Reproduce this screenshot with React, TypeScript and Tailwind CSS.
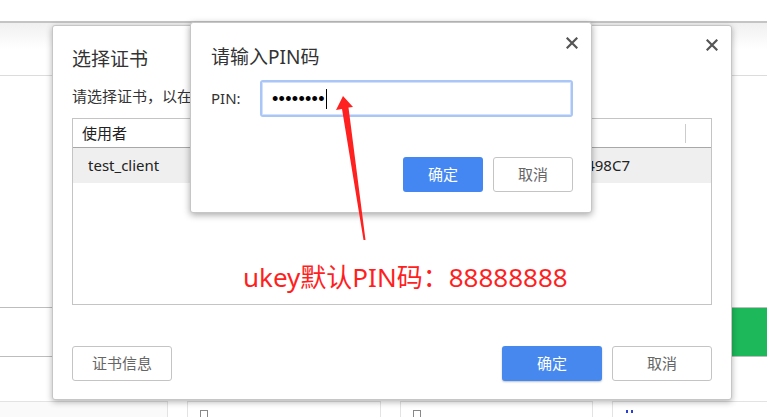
import React from "react";

function XIcon({ className }: { className?: string }) {
  return (
    <svg viewBox="0 0 12 12" className={className} fill="none">
      <path d="M1.5 1.5 L10.5 10.5 M10.5 1.5 L1.5 10.5" stroke="#555555" strokeWidth="2.2" strokeLinecap="square" />
    </svg>
  );
}

export default function App() {
  return (
    <div className="relative w-[767px] h-[417px] overflow-hidden bg-white font-['Noto_Sans','Noto_Sans_CJK_SC',sans-serif] text-[#333]">
      {/* background page */}
      <div className="flex flex-col h-full">
        <div className="h-[21px] shrink-0 bg-white" />
        <div className="h-[2px] shrink-0 bg-[#c4c4c4]" />
        <div className="h-[53px] shrink-0 border-b border-[#dcdcdc] bg-gradient-to-b from-[#f0f0f0] via-white to-white" />
        <div className="h-[231px] shrink-0" />
        <div className="h-[50px] shrink-0 border-y border-[#bdbdbd] flex justify-end">
          <div className="w-[35px] bg-[#1db85a]" />
        </div>
        <div className="h-[44px] shrink-0" />
        <div className="flex-1 flex gap-[19px] bg-white">
          <div className="w-[168px] border-t border-r border-[#e3e3e3] bg-[#fafafa]" />
          <div className="w-[194px] border-t border-x border-[#e3e3e3] pl-[12px] pt-[8px]">
            <div className="w-[8px] h-[8px] border border-[#888] border-b-0" />
          </div>
          <div className="w-[193px] border-t border-x border-[#e3e3e3] pl-[12px] pt-[8px]">
            <div className="w-[8px] h-[8px] border border-[#888] border-b-0" />
          </div>
          <div className="flex-1 border-t border-l border-[#e3e3e3] pl-[13px] pt-[8px] flex gap-[3px]">
            <div className="w-[2px] h-[3px] bg-[#2a3fd6]" />
            <div className="w-[2px] h-[3px] bg-[#2a3fd6]" />
          </div>
        </div>
      </div>

      {/* certificate dialog */}
      <div className="absolute left-[52px] top-[25px] w-[680px] h-[375px] bg-white border border-[#c6c6c6] rounded-[3px] shadow-[0_2px_6px_rgba(0,0,0,0.3)] flex flex-col px-[19px] pt-[20px] pb-[18px]">
        <div className="absolute left-[653px] top-[13px] w-[12px] h-[12px]">
          <XIcon className="w-[12px] h-[12px]" />
        </div>
        <div className="text-[19px] leading-[26px] text-[#333]">选择证书</div>
        <div className="mt-[13px] text-[15px] leading-[22px] text-[#333]">请选择证书，以在</div>
        <div className="mt-[11px] h-[187px] border border-[#c4c4c4] flex flex-col">
          <div className="h-[29px] shrink-0 border-b border-[#a8a8a8] flex items-center text-[15px] text-[#222]">
            <div className="w-[178px] pl-[9px]">使用者</div>
            <div className="w-[220px] pl-[9px] border-l border-[#cccccc]">颁发者</div>
            <div className="w-[214px] pl-[9px] border-l border-[#cccccc]">序列号</div>
            <div className="self-center h-[19px] flex-1 border-l border-[#cccccc]" />
          </div>
          <div className="h-[35px] shrink-0 bg-[#efefef] flex items-center text-[15px] text-[#222]">
            <div className="w-[178px] pl-[15px]">test_client</div>
            <div className="w-[220px] pl-[9px]">test_ca</div>
            <div className="w-[214px] text-right pr-[55px]">0C498C7</div>
          </div>
        </div>
        <div className="mt-auto flex items-center text-[15px]">
          <button className="w-[100px] h-[35px] border border-[#c4c4c4] rounded-[3px] bg-white text-[#666]">证书信息</button>
          <div className="flex-1" />
          <button className="w-[100px] h-[35px] rounded-[3px] bg-[#4688ee] text-white shadow-[0_1px_2px_rgba(0,0,0,0.25)]">确定</button>
          <button className="ml-[10px] w-[100px] h-[35px] border border-[#c4c4c4] rounded-[3px] bg-white text-[#666]">取消</button>
        </div>
      </div>

      {/* PIN dialog */}
      <div className="absolute left-[190px] top-[22px] w-[402px] h-[191px] bg-white border border-[#c6c6c6] rounded-[3px] shadow-[0_2px_7px_rgba(0,0,0,0.35)] flex flex-col pl-[20px] pr-[18px] pt-[21px]">
        <div className="absolute left-[375px] top-[14px] w-[12px] h-[12px]">
          <XIcon className="w-[12px] h-[12px]" />
        </div>
        <div className="text-[19px] leading-[26px] text-[#333]">请输入PIN码</div>
        <div className="mt-[10px] flex items-center">
          <div className="w-[49px] text-[15px] text-[#333]">PIN:</div>
          <div className="w-[313px] h-[37px] border-2 border-[#a9c6f6] rounded-[3px] shadow-[inset_0_0_0_1px_#d3e2fb] flex items-center pl-[10px]">
            <span className="font-['Liberation_Sans',sans-serif] text-[18px] leading-[20px] text-black tracking-[0.3px]">••••••••</span>
            <span className="ml-[1px] w-[1px] h-[20px] bg-black" />
          </div>
        </div>
        <div className="mt-[40px] flex justify-end text-[15px]">
          <button className="w-[80px] h-[35px] rounded-[3px] bg-[#4487f3] text-white">确定</button>
          <button className="ml-[10px] w-[80px] h-[35px] border border-[#c4c4c4] rounded-[3px] bg-white text-[#666]">取消</button>
        </div>
      </div>

      {/* annotation */}
      <svg className="absolute inset-0 pointer-events-none" width="767" height="417" viewBox="0 0 767 417">
        <polygon
          points="343,96 353,107 348.5,107.5 365.5,240 363.5,240 342,109 336,110"
          fill="#ff2020"
        />
      </svg>
      <div className="absolute left-[243px] top-[264px] text-[26px] leading-[26px] text-[#ff1f1f] whitespace-nowrap">
        ukey默认PIN码：88888888
      </div>
    </div>
  );
}
